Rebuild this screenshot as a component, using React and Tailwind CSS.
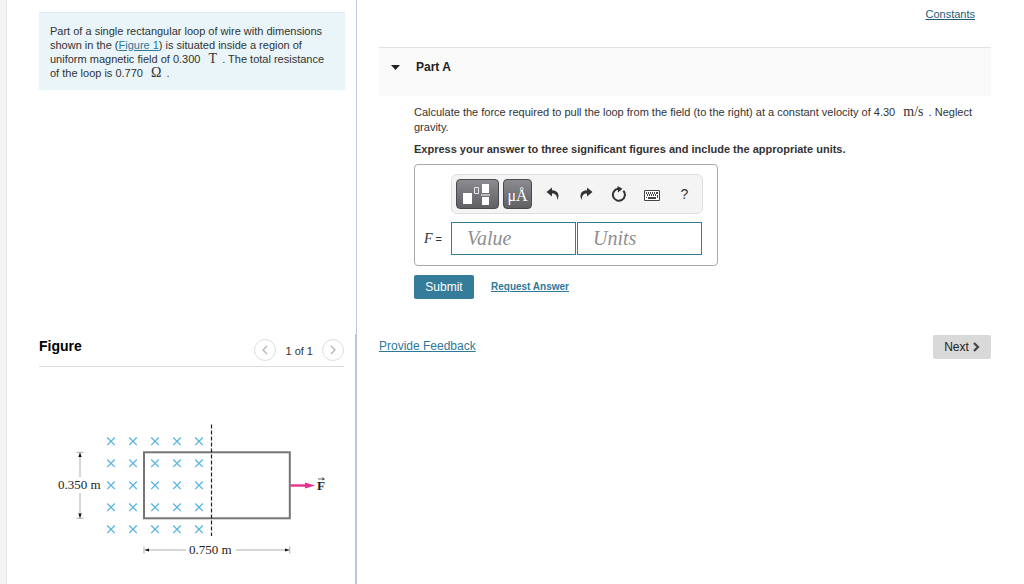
import { useState } from 'react'

const COLS = [111, 133, 155, 177, 199]
const ROWS = [441, 463, 485, 507, 529]

function LoopFigure() {
  return (
    <svg viewBox="39 415 305 155" className="block w-full max-w-[305px]" role="img" aria-label="Rectangular loop in a magnetic field">
      {/* field pointing into the page */}
      <g stroke="#56b4e6" strokeWidth="1.3">
        {ROWS.map(y => COLS.map(x => (
          <path key={`${x}-${y}`} d={`M${x - 3.8} ${y - 3.5}l7.6 7.6m0 -7.6l-7.6 7.6`} />
        )))}
      </g>
      <rect x="144" y="452.3" width="145.8" height="66" fill="none" stroke="#757577" strokeWidth="2" />
      <path d="M211.5 424.500V536" stroke="#222" strokeWidth="1.2" strokeDasharray="4 2" />

      {/* dimensions */}
      <g stroke="#8a8a8a" strokeWidth="0.7">
        <path d="M76.500 452.300h7M76.500 518.300h7M80 453v24M80 493v25" />
        <path d="M144 546.500v7M289.700 546.500v7M145 550h41M236 550h53" />
      </g>
      <g fill="#111">
        <path d="M80 452.500l-1.700 4.500h3.400zM80 518l-1.700 -4.500h3.400zM144.500 550l4.500 -1.600v3.200zM289.500 550l-4.500 -1.600v3.200z" />
      </g>
      <g fill="#222" fontFamily="'Liberation Serif', serif" fontSize="13">
        <text x="58" y="489">0.350 m</text>
        <text x="189" y="554">0.750 m</text>
        <text x="317" y="490" fontWeight="bold">F</text>
      </g>
      <path d="M318 479h6M322 477.500l2.500 1.500l-2.500 1" fill="none" stroke="#222" strokeWidth="0.7" />

      {/* pulling force */}
      <path d="M290.500 485.500h16" stroke="#e8308c" strokeWidth="2.400" />
      <path d="M305 482.500l10 3l-10 3z" fill="#e8308c" />
    </svg>
  )
}

function FigurePanel() {
  const pager = 'flex h-[22px] w-[22px] items-center justify-center rounded-full border border-[#dedede]'
  return (
    <section className="flex-1 border-r-2 border-[#b9c8dc] pl-8 pr-[11px]">
      <div className="flex h-[33px] items-center border-b border-[#dcdcdc]">
        <h2 className="flex-1 pb-2 text-[14px] font-bold text-black">Figure</h2>
        <button className={pager} aria-label="Previous figure">
          <svg width="8" height="10" viewBox="0 0 8 10" fill="none" stroke="#b4b4b4" strokeWidth="1.3"><path d="M6 1L2 5l4 4" /></svg>
        </button>
        <span className="px-[9px] pt-0.5 text-[11px]">1 of 1</span>
        <button className={pager} aria-label="Next figure">
          <svg width="8" height="10" viewBox="0 0 8 10" fill="none" stroke="#b4b4b4" strokeWidth="1.3"><path d="M2 1l4 4l-4 4" /></svg>
        </button>
      </div>
      <div className="pt-12">
        <LoopFigure />
      </div>
    </section>
  )
}

function Toolbar() {
  const dark = 'flex h-[30px] items-center justify-center rounded-[4px] border border-[#4a4a4c] bg-linear-to-b from-[#8c8c90] to-[#606064] text-white'
  const plain = 'flex h-6 w-[33px] items-center justify-center'
  return (
    <div className="flex h-10 w-[252px] items-center rounded-[6px] border border-[#dedede] bg-[#f4f4f4] pl-1">
      <button className={`${dark} w-[43px]`} aria-label="Templates">
        <svg width="30" height="24" viewBox="0 0 30 24" fill="#fff">
          <path d="M0 11h9v11H0zM19 2h7v9h-7zM19 15h7v8h-7zM18 12.500h9v1h-9z" />
          <path d="M11.500 5.500h4v6h-4z" fill="none" stroke="#e8e8e8" />
        </svg>
      </button>
      <button className={`${dark} ml-1 w-[29px] pt-1 font-['Liberation_Serif',serif] text-[16px]`} aria-label="Symbols">μÅ</button>
      <button className={`${plain} ml-1`} aria-label="Undo">
        <svg width="14" height="14" viewBox="0 0 14 14" fill="#333"><path d="M6 0.500L0.500 5L6 9.500V6.500C9.500 6.500 11 8 11.300 13C13.800 8.500 12.500 3.500 6 3.300z" /></svg>
      </button>
      <button className={plain} aria-label="Redo">
        <svg width="14" height="14" viewBox="0 0 14 14" fill="#333"><path d="M8 0.500L13.500 5L8 9.500V6.500C4.500 6.500 3 8 2.700 13C0.200 8.500 1.500 3.500 8 3.300z" /></svg>
      </button>
      <button className={plain} aria-label="Reset">
        <svg width="16" height="16" viewBox="0 0 16 16"><path d="M12.300 4.700A6 6 0 1 1 7.500 2.800" fill="none" stroke="#333" strokeWidth="2" /><path d="M6.500 0l5 2.800l-4.500 3.700z" fill="#333" /></svg>
      </button>
      <button className={`${plain} pt-0.5`} aria-label="Keyboard shortcuts">
        <svg width="16" height="11" viewBox="0 0 16 11" fill="#444">
          <path d="M0.500 0.500h15v10h-15z" fill="#fff" stroke="#444" />
          <path d="M2 2h1v2H2zM4 2h1v2H4zM6 2h1v2H6zM8 2h1v2H8zM10 2h1v2h-1zM12 2h2v2h-2zM3 4h1v2H3zM5 4h1v2H5zM7 4h1v2H7zM9 4h1v2H9zM11 4h1v2h-1zM2 7h1v1H2zM13 5h1v3h-1zM4 7h8v2H4z" />
        </svg>
      </button>
      <button className={`${plain} text-[14px]`} aria-label="Help">?</button>
    </div>
  )
}

function AnswerBox() {
  const [value, setValue] = useState('')
  const [units, setUnits] = useState('')
  const field = "h-[33px] w-[125px] border border-[#357b9a] bg-white px-[15px] font-['Liberation_Serif',serif] text-[20px] text-[#333] placeholder:italic placeholder:text-[#8f8f8f] focus:outline-none"
  return (
    <div className="mt-2 w-fit rounded-[4px] border border-[#a9a9a9] pb-[10px] pl-9 pr-[14px] pt-[9px]">
      <Toolbar />
      <div className="-ml-[27px] mt-2 flex items-center">
        <label htmlFor="force" className="w-[27px] text-[11px]">
          <span className="font-['Liberation_Serif',serif] text-[14px] italic">F</span> =
        </label>
        <input id="force" className={field} placeholder="Value" value={value} onChange={e => setValue(e.target.value)} />
        <input aria-label="Units" className={`${field} ml-px`} placeholder="Units" value={units} onChange={e => setUnits(e.target.value)} />
      </div>
    </div>
  )
}

// unit symbol set in the math face
function Unit({ children }) {
  return <span className="px-0.5 font-['Liberation_Serif',serif] text-[14px] leading-[0px]">{children}</span>
}

export default function App() {
  const [open, setOpen] = useState(true)

  return (
    <div className="flex min-h-screen bg-white font-['Liberation_Sans',Arial,sans-serif] text-[#333]">
      <div className="w-[7px] shrink-0 border-r border-[#e6e6e6] bg-[#f4f4f4]" />

      {/* Problem statement and figure */}
      <aside className="flex w-[350px] shrink-0 flex-col">
        <section className="min-h-[334px] border-r border-[#b9c8dc] pl-8 pr-[11px] pt-3">
          <div className="border-t border-[#dde6e8] bg-[#e9f5f8] px-[11px] pb-[10px] pt-[11px] text-[11px] leading-[14px]">
            Part of a single rectangular loop of wire with dimensions<br />
            shown in the (<a href="#figure" className="text-[#2f7899] underline">Figure 1</a>) is situated inside a region of<br />
            uniform magnetic field of 0.300 &nbsp;<Unit>T</Unit> . The total resistance<br />
            of the loop is 0.770 &nbsp;<Unit>Ω</Unit> .
          </div>
        </section>
        <FigurePanel />
      </aside>

      {/* Question */}
      <main className="min-w-0 flex-1 pl-[22px] pr-[33px]">
        <div className="flex h-[47px] justify-end pr-4 pt-[7px] text-[11px] leading-[14px]">
          <a href="#constants" className="text-[#1f5c78] underline">Constants</a>
        </div>
        <div className="h-[49px] border-t border-[#e2e2e2] bg-[#f9f9f9] pl-3 pt-[11px]">
          <button className="flex items-center gap-4 text-[12px] leading-4 font-bold text-[#222]" aria-expanded={open} onClick={() => setOpen(!open)}>
            <svg width="9" height="5" viewBox="0 0 9 5" fill="#222"><path d="M0 0h9L4.500 5z" /></svg>
            Part A
          </button>
        </div>

        {open && (
          <div className="pl-[35px] pt-[9px]">
            <p className="text-[11px] leading-[15px]">
              Calculate the force required to pull the loop from the field (to the right) at a constant velocity of 4.30 &nbsp;<Unit>m/s</Unit> . Neglect<br />
              gravity.
            </p>
            <p className="mt-[7px] text-[11px] leading-[14px] font-bold">Express your answer to three significant figures and include the appropriate units.</p>
            <AnswerBox />
            <div className="mt-[9px] flex items-center gap-[17px]">
              <button className="h-6 w-[60px] rounded-[2px] bg-[#357b9a] text-[12px] text-white">Submit</button>
              <button className="pb-0.5 text-[10px] font-bold text-[#2f7899] underline">Request Answer</button>
            </div>
          </div>
        )}

        <div className="mt-9 flex items-center justify-between text-[12px]">
          <a href="#feedback" className="pb-0.5 text-[#2f7899] underline">Provide Feedback</a>
          <button className="flex h-6 w-[58px] items-center justify-center gap-1 rounded-[2px] bg-[#d9d9d9] text-[#222]">
            Next
            <svg width="7" height="10" viewBox="0 0 7 10" fill="none" stroke="#444" strokeWidth="2.200"><path d="M1 1l4 4l-4 4" /></svg>
          </button>
        </div>
      </main>
    </div>
  )
}
